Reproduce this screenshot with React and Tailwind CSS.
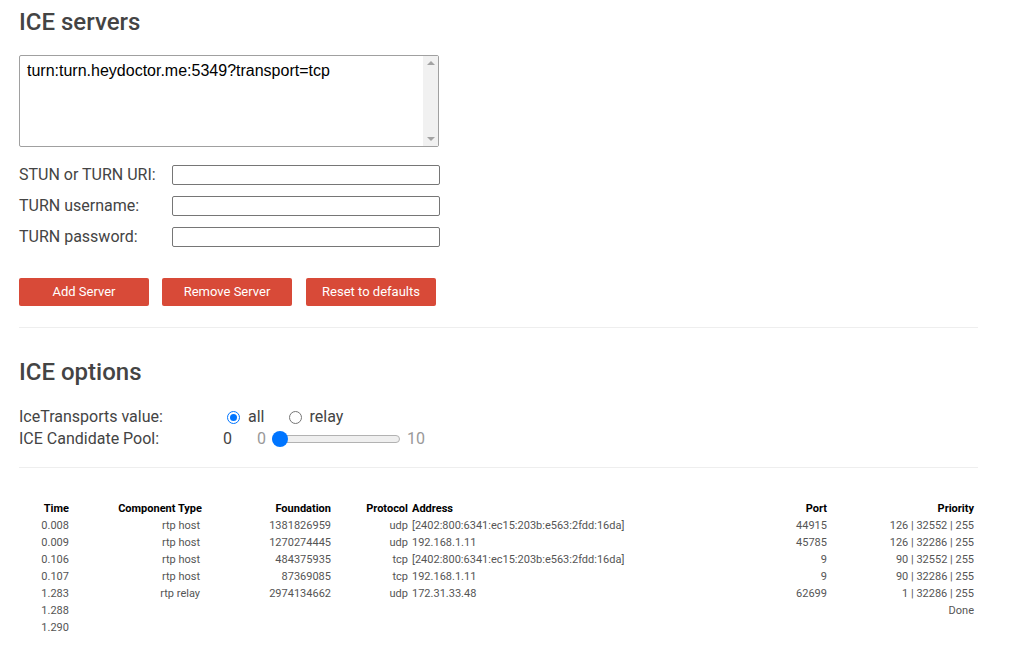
import React from "react";

const candidates = [
  { time: "0.008", kind: "rtp host", foundation: "1381826959", protocol: "udp", address: "[2402:800:6341:ec15:203b:e563:2fdd:16da]", port: "44915", priority: "126 | 32552 | 255" },
  { time: "0.009", kind: "rtp host", foundation: "1270274445", protocol: "udp", address: "192.168.1.11", port: "45785", priority: "126 | 32286 | 255" },
  { time: "0.106", kind: "rtp host", foundation: "484375935", protocol: "tcp", address: "[2402:800:6341:ec15:203b:e563:2fdd:16da]", port: "9", priority: "90 | 32552 | 255" },
  { time: "0.107", kind: "rtp host", foundation: "87369085", protocol: "tcp", address: "192.168.1.11", port: "9", priority: "90 | 32286 | 255" },
  { time: "1.283", kind: "rtp relay", foundation: "2974134662", protocol: "udp", address: "172.31.33.48", port: "62699", priority: "1 | 32286 | 255" },
  { time: "1.288", kind: "", foundation: "", protocol: "", address: "", port: "", priority: "Done" },
  { time: "1.290", kind: "", foundation: "", protocol: "", address: "", port: "", priority: "" },
];

const fields = ["STUN or TURN URI:", "TURN username:", "TURN password:"];

export default function App() {
  return (
    <div className="min-h-screen bg-white px-[19px] pt-[8px] text-[#444] [font-family:Roboto,'Liberation_Sans',sans-serif]">
      <div className="w-[959px]">
        {/* ICE servers */}
        <h2 className="text-[24px] leading-[29px] font-medium">ICE servers</h2>

        <div className="mt-[18px] flex w-[420px] h-[92px] border border-[#a0a0a0] rounded-[2px] bg-white">
          <textarea
            className="flex-1 resize-none outline-none px-[7px] pt-[5px] text-[16px] leading-[19px] text-black [font-family:'Liberation_Sans',Arial,sans-serif]"
            defaultValue="turn:turn.heydoctor.me:5349?transport=tcp"
          />
          <div className="w-[15px] bg-[#f1f1f1] flex flex-col items-center justify-between py-[5px]">
            <div className="w-0 h-0 border-x-[4px] border-x-transparent border-b-[4px] border-b-[#a3a3a3]" />
            <div className="w-0 h-0 border-x-[4px] border-x-transparent border-t-[4px] border-t-[#a3a3a3]" />
          </div>
        </div>

        <div className="mt-[18px] flex flex-col gap-[11px]">
          {fields.map((label) => (
            <div key={label} className="flex items-center h-[20px]">
              <label className="w-[153px] text-[16px] leading-[20px]">{label}</label>
              <input
                type="text"
                className="w-[268px] h-[20px] border border-[#767676] rounded-[2px] outline-none"
              />
            </div>
          ))}
        </div>

        <div className="mt-[31px] flex">
          <button className="w-[130px] h-[28px] bg-[#d84a38] text-white text-[13px] rounded-[2px]">Add Server</button>
          <button className="ml-[13px] w-[130px] h-[28px] bg-[#d84a38] text-white text-[13px] rounded-[2px]">Remove Server</button>
          <button className="ml-[14px] w-[130px] h-[28px] bg-[#d84a38] text-white text-[13px] rounded-[2px]">Reset to defaults</button>
        </div>

        <hr className="mt-[21px] border-0 border-t border-[#eee]" />

        {/* ICE options */}
        <h2 className="mt-[30px] text-[24px] leading-[29px] font-medium">ICE options</h2>

        <div className="mt-[19px] flex items-center h-[22px] text-[16px]">
          <span className="w-[208px]">IceTransports value:</span>
          <span className="w-[13px] h-[13px] rounded-full border-[1.5px] border-[#0075ff] flex items-center justify-center">
            <span className="w-[7px] h-[7px] rounded-full bg-[#0075ff]" />
          </span>
          <span className="ml-[8px]">all</span>
          <span className="ml-[25px] w-[13px] h-[13px] rounded-full border border-[#767676]" />
          <span className="ml-[7px]">relay</span>
        </div>

        <div className="flex items-center h-[22px] text-[16px]">
          <span className="w-[204px]">ICE Candidate Pool:</span>
          <span>0</span>
          <span className="ml-[25px] text-[#999]">0</span>
          <div className="relative ml-[6px] w-[128px] h-[16px] flex items-center">
            <div className="w-full h-[8px] rounded-full bg-[#efefef] border border-[#b2b2b2]" />
            <div className="absolute left-0 top-0 w-[16px] h-[16px] rounded-full bg-[#0075ff]" />
          </div>
          <span className="ml-[7px] text-[#999]">10</span>
        </div>

        <hr className="mt-[17px] border-0 border-t border-[#eee]" />

        {/* Candidates */}
        <table className="mt-[32px] table-fixed border-collapse text-[11px] leading-[17px] w-[957px]">
          <colgroup>
            <col className="w-[52px]" />
            <col className="w-[133px]" />
            <col className="w-[129px]" />
            <col className="w-[77px]" />
            <col className="w-[380px]" />
            <col className="w-[39px]" />
            <col className="w-[147px]" />
          </colgroup>
          <thead>
            <tr className="text-black font-bold h-[17px]">
              <th className="text-right px-[2px] whitespace-nowrap">Time</th>
              <th className="text-right px-[2px] whitespace-nowrap">Component Type</th>
              <th className="text-right px-[2px] whitespace-nowrap">Foundation</th>
              <th className="text-right px-[2px] whitespace-nowrap">Protocol</th>
              <th className="text-left px-[2px] whitespace-nowrap">Address</th>
              <th className="text-right px-[2px] whitespace-nowrap">Port</th>
              <th className="text-right px-[2px] whitespace-nowrap">Priority</th>
            </tr>
          </thead>
          <tbody className="text-[#555]">
            {candidates.map((c) => (
              <tr key={c.time} className="h-[17px]">
                <td className="text-right px-[2px]">{c.time}</td>
                <td className="text-right pr-[4px] whitespace-nowrap">{c.kind}</td>
                <td className="text-right px-[2px]">{c.foundation}</td>
                <td className="text-right px-[2px]">{c.protocol}</td>
                <td className="text-left px-[2px] whitespace-nowrap">{c.address}</td>
                <td className="text-right px-[2px]">{c.port}</td>
                <td className="text-right px-[2px] whitespace-nowrap">{c.priority}</td>
              </tr>
            ))}
          </tbody>
        </table>
      </div>
    </div>
  );
}
